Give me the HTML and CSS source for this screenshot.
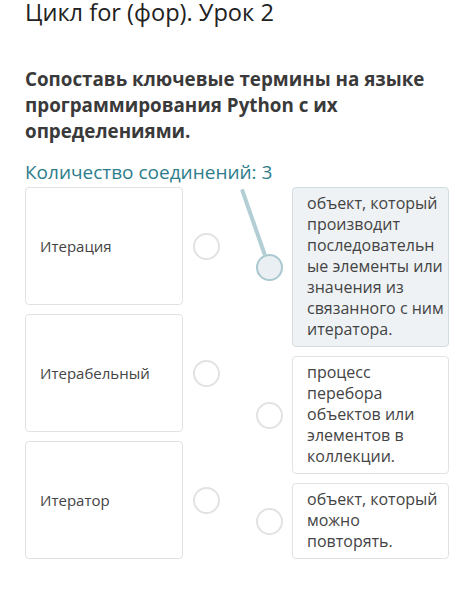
FILE: index.html
```html
<!DOCTYPE html>
<html lang="ru">
<head>
    <meta charset="UTF-8">
    <title>Цикл for (фор). Урок 2</title>
    <link rel="stylesheet" href="styles.css">
</head>
<body>
    <h1 class="lesson-title">Цикл for (фор). Урок 2</h1>

    <h2 class="task-title">Сопоставь ключевые термины на языке программирования Python с их определениями.</h2>

    <p class="links-count">Количество соединений: 3</p>

    <div class="match">
        <div class="match-col terms">
            <div class="term-row">
                <div class="card term">Итерация</div>
                <span class="dot"></span>
            </div>
            <div class="term-row">
                <div class="card term">Итерабельный</div>
                <span class="dot"></span>
            </div>
            <div class="term-row">
                <div class="card term">Итератор</div>
                <span class="dot"></span>
            </div>
        </div>

        <div class="match-col defs">
            <div class="def-row">
                <span class="dot active"></span>
                <div class="card def active">объект, который<br>производит<br>последовательн<br>ые элементы или<br>значения из<br>связанного с ним<br>итератора.</div>
            </div>
            <div class="def-row">
                <span class="dot"></span>
                <div class="card def">процесс<br>перебора<br>объектов или<br>элементов в<br>коллекции.</div>
            </div>
            <div class="def-row">
                <span class="dot"></span>
                <div class="card def">объект, который<br>можно<br>повторять.</div>
            </div>
        </div>

        <!-- линия соединения, которую тянут к первому определению -->
        <svg class="link-line" width="260" height="90" viewBox="0 0 260 90">
            <line x1="217.5" y1="4" x2="239.5" y2="67" stroke="#b3cfd5" stroke-width="4" stroke-linecap="round"/>
        </svg>
    </div>
</body>
</html>
```

FILE: styles.css
```css
body {
    font-family: "Open Sans", "Noto Sans", sans-serif;
    background-color: #ffffff;
    margin: 0;
    padding: 0 25px;
    color: #333;
}

.lesson-title {
    font-size: 23.6px;
    font-weight: 400;
    color: #222;
    margin: 0;
    line-height: 24px;
}

.task-title {
    font-size: 18.8px;
    font-weight: 700;
    line-height: 26px;
    color: #3a3a3a;
    margin: 42px 0 0;
}

.links-count {
    font-size: 19px;
    color: #2d7d8c;
    margin: 16px 0 0;
    line-height: 24px;
}

.match {
    position: relative;
    display: flex;
    gap: 36px;
    margin-top: 3px;
    align-items: flex-start;
}

.match-col {
    display: flex;
    flex-direction: column;
    gap: 9px;
    flex-shrink: 0;
}

.term-row,
.def-row {
    display: flex;
    align-items: center;
}

.term-row {
    gap: 10px;
}

.def-row {
    gap: 9px;
}

.card {
    box-sizing: border-box;
    background-color: #fff;
    border: 1px solid #e2e2e2;
    border-radius: 4px;
    color: #444;
    flex-shrink: 0;
}

.term {
    width: 158px;
    height: 118px;
    display: flex;
    align-items: center;
    padding: 0 14px;
    font-size: 15px;
}

.def {
    width: 157px;
    padding: 5px 10px 6px 14px;
    font-size: 16px;
    line-height: 21px;
    white-space: nowrap;
}

.def.active {
    background-color: #eef2f5;
    border-color: #d3dce1;
}

.dot {
    box-sizing: border-box;
    width: 27px;
    height: 27px;
    border-radius: 50%;
    border: 2px solid #e2e2e2;
    background-color: #fff;
    flex-shrink: 0;
}

.dot.active {
    border: 2.5px solid #a9c8cf;
    background-color: #e9eff2;
}

.link-line {
    position: absolute;
    left: 0;
    top: 0;
    pointer-events: none;
}
```
